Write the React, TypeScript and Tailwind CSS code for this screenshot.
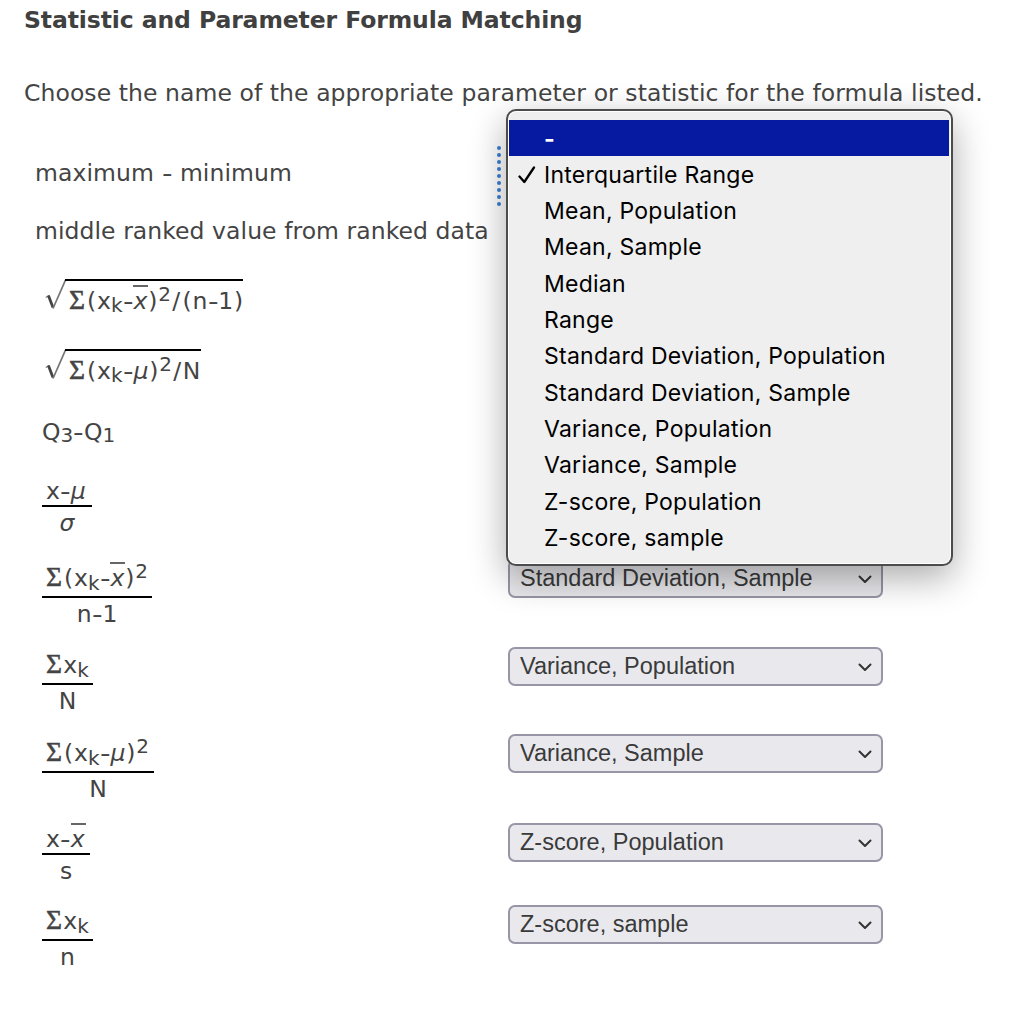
import type { ReactNode } from "react";

const Sigma = () => (
  <span className="inline-block w-[17.3px] font-['Liberation_Serif',serif] text-[27.5px] leading-none [-webkit-text-stroke:0.5px_#444]">Σ</span>
);
const Sub = ({ children, drop = "top-[4px]" }: { children: ReactNode; drop?: string }) => (
  <span className={`relative text-[20px] ${drop}`}>{children}</span>
);
const Sup = ({ children }: { children: ReactNode }) => (
  <span className="relative top-[-8px] text-[20px]">{children}</span>
);
const Sym = ({ children }: { children: ReactNode }) => (
  <span className="inline-block w-[10.8px] text-center">{children}</span>
);
const Minus = () => (
  <span className="inline-block w-[10.8px] text-center">
    <span className="inline-block scale-x-[1.25]">-</span>
  </span>
);
const Mu = () => <i>μ</i>;
const XBar = () => (
  <span className="relative inline-block leading-none">
    <i>x</i>
    <span className="absolute left-0 top-[-5px] h-[2px] w-[15px] bg-[#666]" />
  </span>
);

function Root({ children, width }: { children: ReactNode; width: string }) {
  return (
    <div className="flex pl-[45px]">
      <svg className="-mr-px h-[32px] w-[21px]" viewBox="0 0 21 32" fill="none">
        <path d="M0.8 18.5 L4 16.5" stroke="#777" strokeWidth="1.3" />
        <path d="M3.4 16.5 L8 28.5" stroke="#444" strokeWidth="2.8" />
        <path d="M8 29.5 L20.5 1" stroke="#777" strokeWidth="1.8" />
      </svg>
      <div className={`h-[46px] whitespace-nowrap border-t-2 border-black pl-[4px] leading-[40px] ${width}`}>{children}</div>
    </div>
  );
}

function Fraction({ top, bottom, width, lift }: { top: ReactNode; bottom: ReactNode; width: string; lift: string }) {
  return (
    <div className={`ml-[42px] whitespace-nowrap text-center ${width}`}>
      <div className={`h-[50px] border-b-2 border-black pl-[4px] text-left ${lift}`}>{top}</div>
      <div className="h-[36px] leading-[33px]">{bottom}</div>
    </div>
  );
}

function Select({ label }: { label: string }) {
  return (
    <div className="flex h-[39px] w-[375px] items-center justify-between rounded-[7px] border-2 border-[#9896a6] bg-[#e9e9ed] pl-[10px] pr-[9px] font-['Liberation_Sans',sans-serif] text-[23.5px] leading-none text-[#3a3a3a]">
      <span className="whitespace-nowrap pt-px">{label}</span>
      <svg className="h-[14px] w-[14px]" viewBox="0 0 14 14" fill="none" stroke="#333" strokeWidth="2" strokeLinecap="round" strokeLinejoin="round">
        <path d="M1.5 4.5 L7 10 L12.5 4.5" />
      </svg>
    </div>
  );
}

function Row({ height, offset, select, children }: { height: string; offset?: string; select?: string; children: ReactNode }) {
  return (
    <div className={`grid grid-cols-[508px_1fr] ${height}`}>
      <div>{children}</div>
      {select && (
        <div className={offset}>
          <Select label={select} />
        </div>
      )}
    </div>
  );
}

const options = [
  "Interquartile Range",
  "Mean, Population",
  "Mean, Sample",
  "Median",
  "Range",
  "Standard Deviation, Population",
  "Standard Deviation, Sample",
  "Variance, Population",
  "Variance, Sample",
  "Z-score, Population",
  "Z-score, sample",
];

function Menu() {
  return (
    <div className="absolute left-[506px] top-[109px] h-[457px] w-[447px] rounded-[10px] border-2 border-[#4c4c4c] bg-[#efefef] pl-px pr-[2px] pt-[9px] font-['Inter',sans-serif] text-[23px] tracking-[0.25px] text-black shadow-[0_12px_36px_rgba(0,0,0,0.33),inset_0_0_0_1px_#fff]">
      <div className="mb-px h-[36px] bg-[#061aa1] pl-[35px] font-bold leading-[38px] text-white">-</div>
      {options.map((o, i) => (
        <div key={o} className="flex h-[36.3px] items-center">
          <span className="flex w-[35px] pl-[9px]">
            {i === 0 && (
              <svg className="h-[20px] w-[18px]" viewBox="0 0 18 20" fill="none" stroke="#000" strokeWidth="2.3" strokeLinecap="round" strokeLinejoin="round">
                <path d="M1.5 11.5 L6.3 17 L16 2.5" />
              </svg>
            )}
          </span>
          <span className="whitespace-nowrap">{o}</span>
        </div>
      ))}
    </div>
  );
}

export default function App() {
  return (
    <div className="relative h-[1010px] w-[1024px] overflow-hidden bg-white font-['DejaVu_Sans',sans-serif] text-[23.5px] text-[#444]">
      <h1 className="h-[40px] whitespace-nowrap pl-[24px] text-[23.5px] font-bold leading-[40px] tracking-[-0.1px] text-[#404040]">
        Statistic and Parameter Formula Matching
      </h1>
      <p className="mt-[32px] h-[72px] whitespace-nowrap pl-[24px] leading-[42px] tracking-[0.07px]">
        Choose the name of the appropriate parameter or statistic for the formula listed.
      </p>
      <Row height="h-[58px]">
        <p className="whitespace-nowrap pl-[35px] leading-[58px] tracking-[0.08px]">maximum <Minus /> minimum</p>
      </Row>
      <Row height="h-[77px]">
        <p className="whitespace-nowrap pl-[35px] leading-[58px] tracking-[0.06px]">middle ranked value from ranked data</p>
      </Row>
      <Row height="h-[70px]">
        <Root width="w-[178px]">
          <Sigma /><Sym>(</Sym>x<Sub drop="top-[3px]">k</Sub><Minus /><XBar /><Sym>)</Sym><Sup>2</Sup><Sym>/</Sym><Sym>(</Sym>n<Minus />1<Sym>)</Sym>
        </Root>
      </Row>
      <Row height="h-[65px]">
        <Root width="w-[136px]">
          <Sigma /><Sym>(</Sym>x<Sub drop="top-[3px]">k</Sub><Minus /><Mu /><Sym>)</Sym><Sup>2</Sup><Sym>/</Sym>N
        </Root>
      </Row>
      <Row height="h-[43px]">
        <p className="pl-[42px] leading-[36px]">Q<Sub drop="top-[2px]">3</Sub><Minus />Q<Sub drop="top-[2px]">1</Sub></p>
      </Row>
      <Row height="h-[91px]">
        <Fraction width="w-[50px]" lift="leading-[68px]" top={<>x<Minus /><Mu /></>} bottom={<i>σ</i>} />
      </Row>
      <Row height="h-[87px]" offset="pt-[11px]" select="Standard Deviation, Sample">
        <Fraction width="w-[110px]" lift="leading-[60px]" top={<><Sigma /><Sym>(</Sym>x<Sub>k</Sub><Minus /><XBar /><Sym>)</Sym><Sup>2</Sup></>} bottom={<>n<Minus />1</>} />
      </Row>
      <Row height="h-[88px]" offset="pt-[12px]" select="Variance, Population">
        <Fraction width="w-[51px]" lift="leading-[60px]" top={<><Sigma />x<Sub>k</Sub></>} bottom="N" />
      </Row>
      <Row height="h-[82px]" offset="pt-[11px]" select="Variance, Sample">
        <Fraction width="w-[112px]" lift="leading-[60px]" top={<><Sigma /><Sym>(</Sym>x<Sub>k</Sub><Minus /><Mu /><Sym>)</Sym><Sup>2</Sup></>} bottom="N" />
      </Row>
      <Row height="h-[86px]" offset="pt-[18px]" select="Z-score, Population">
        <Fraction width="w-[48px]" lift="leading-[68px]" top={<>x<Minus /><XBar /></>} bottom="s" />
      </Row>
      <Row height="h-[86px]" offset="pt-[14px]" select="Z-score, sample">
        <Fraction width="w-[51px]" lift="leading-[60px]" top={<><Sigma />x<Sub>k</Sub></>} bottom="n" />
      </Row>
      <div className="absolute left-[497px] top-[146px] flex h-[60px] w-[4px] flex-col justify-between">
        {Array.from({ length: 9 }, (_, i) => (
          <span key={i} className="size-[4px] rounded-full bg-[#3a7fd5]" />
        ))}
      </div>
      <Menu />
    </div>
  );
}
